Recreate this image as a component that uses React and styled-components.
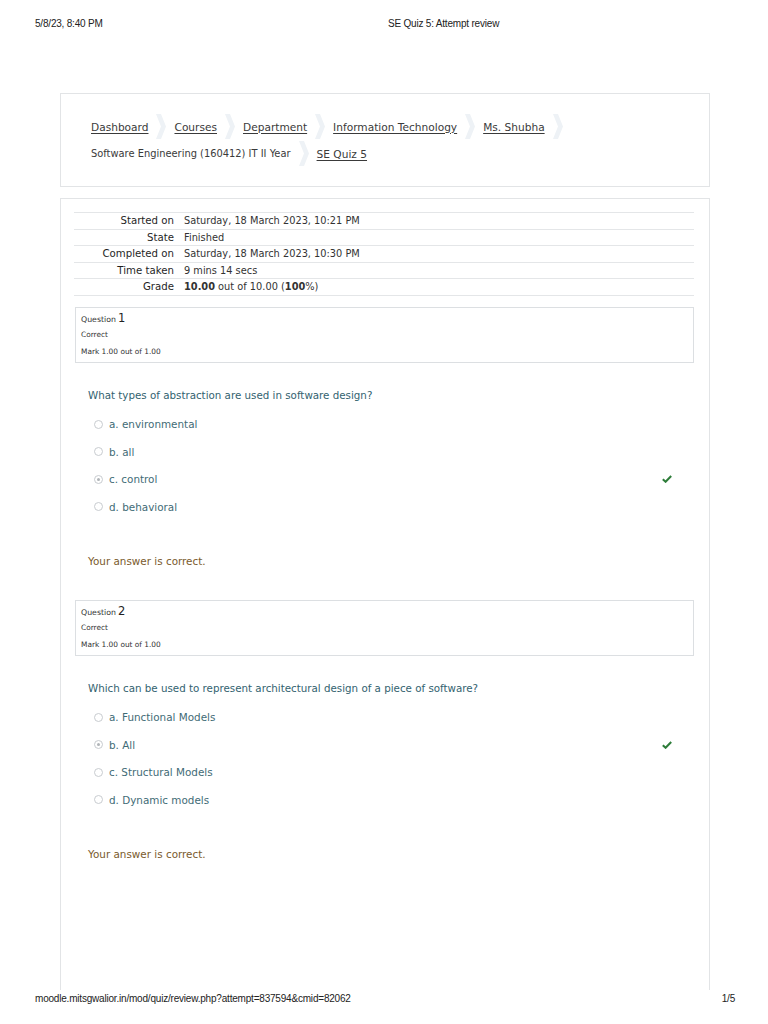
import styled, { createGlobalStyle } from "styled-components";

const GlobalStyle = createGlobalStyle`
	html, body {
		margin: 0;
		padding: 0;
		background: #fff;
	}
	body {
		font-family: "DejaVu Sans", "Noto Sans", sans-serif;
	}
`;

const Page = styled.div`
	width: 768px;
	height: 1024px;
	display: flex;
	flex-direction: column;
	overflow: hidden;
`;

const PrintBar = styled.div`
	display: grid;
	grid-template-columns: 353px 1fr auto;
	align-items: center;
	padding: 0 33px 0 35px;
	height: ${(p) => p.$height}px;
	font-family: "Liberation Sans", Arial, sans-serif;
	font-size: 10px;
	color: #222;
	letter-spacing: -0.2px;
`;

const PrintTop = styled.div`
	height: 93px;
`;

const Card = styled.div`
	margin: 0 58px 0 60px;
	border: 1px solid #e2e4e6;
	background: #fff;
`;

const CrumbCard = styled(Card)`
	height: 94px;
	box-sizing: border-box;
	padding: 19px 30px;
	display: flex;
	flex-direction: column;
`;

const CrumbRow = styled.div`
	display: flex;
	align-items: center;
	height: 27px;
`;

const Crumb = styled.span`
	font-size: ${(p) => (p.$link ? 10.6 : 9.9)}px;
	color: #3a3a3a;
	text-decoration: ${(p) => (p.$link ? "underline" : "none")};
	text-underline-offset: 2px;
	white-space: nowrap;
`;

const Sep = styled.span`
	width: 26px;
	height: 25px;
	display: flex;
	align-items: center;
	justify-content: center;
`;

const MainCard = styled(Card)`
	margin-top: 11px;
	flex: 1;
	border-bottom: none;
	padding: 13px 15px 0 13px;
`;

const Summary = styled.table`
	width: 100%;
	border-collapse: collapse;
	font-size: 9.8px;
	color: #333;
	margin-bottom: 11px;

	td,
	th {
		border-top: 1px solid #e4e6e8;
		border-bottom: 1px solid #e4e6e8;
		height: 15.5px;
		padding: 0;
		line-height: 15px;
	}
	th {
		width: 110px;
		text-align: right;
		font-weight: normal;
		font-size: 10.2px;
		color: #1f1f1f;
		padding-right: 10px;
		box-sizing: border-box;
	}
	b {
		font-weight: 600;
	}
`;

const InfoBox = styled.div`
	border: 1px solid #dcdfe2;
	padding: 3px 5px 0;
	height: 56px;
	box-sizing: border-box;
	margin-left: 1px;
	color: #333;
`;

const InfoLine = styled.div`
	font-size: ${(p) => p.$size || 7.4}px;
	line-height: ${(p) => p.$lh || 16}px;
`;

const QNum = styled.span`
	font-size: 11.5px;
	color: #222;
	margin-left: 2px;
`;

const QText = styled.div`
	margin: 24px 0 0 14px;
	font-size: 10.3px;
	line-height: 16px;
	color: #32626f;
`;

const Options = styled.div`
	margin-top: 8px;
	display: flex;
	flex-direction: column;
`;

const Option = styled.div`
	display: flex;
	align-items: center;
	height: 27.5px;
	padding-left: 20px;
	padding-right: 22px;
	font-size: 10.4px;
	color: #3f6b76;
`;

const Radio = styled.span`
	width: 7px;
	height: 7px;
	border-radius: 50%;
	border: 1px solid #c8ccd0;
	margin-right: 6px;
	display: flex;
	align-items: center;
	justify-content: center;
	flex: none;

	&::after {
		content: "";
		width: 3px;
		height: 3px;
		border-radius: 50%;
		background: ${(p) => (p.$checked ? "#b0b4b8" : "transparent")};
	}
`;

const Label = styled.span`
	flex: 1;
`;

const Feedback = styled.div`
	margin: 32px 0 31px 14px;
	font-size: 10.4px;
	line-height: 16px;
	color: #7a5a2c;
`;

const Chevron = () => (
	<svg width="10" height="25" viewBox="0 0 10 25">
		<path d="M0 0 L5 0 L10 12.5 L5 25 L0 25 L5 12.5 Z" fill="#eef2f6" />
	</svg>
);

const Check = () => (
	<svg width="10" height="8" viewBox="0 0 10 8">
		<path d="M0.8 4.2 L3.6 6.8 L9.2 1" stroke="#2e7d3a" strokeWidth="2" fill="none" />
	</svg>
);

const questions = [
	{
		num: "1",
		text: "What types of abstraction are used in software design?",
		options: ["a. environmental", "b. all", "c. control", "d. behavioral"],
		answer: 2,
	},
	{
		num: "2",
		text: "Which can be used to represent architectural design of a piece of software?",
		options: ["a. Functional Models", "b. All", "c. Structural Models", "d. Dynamic models"],
		answer: 1,
	},
];

const summary = [
	["Started on", "Saturday, 18 March 2023, 10:21 PM"],
	["State", "Finished"],
	["Completed on", "Saturday, 18 March 2023, 10:30 PM"],
	["Time taken", "9 mins 14 secs"],
];

const App = () => {
	return (
		<Page>
			<GlobalStyle />
			<PrintTop>
				<PrintBar $height={46}>
					<span>5/8/23, 8:40 PM</span>
					<span>SE Quiz 5: Attempt review</span>
					<span></span>
				</PrintBar>
			</PrintTop>

			<CrumbCard>
				<CrumbRow>
					<Crumb $link>Dashboard</Crumb>
					<Sep><Chevron /></Sep>
					<Crumb $link>Courses</Crumb>
					<Sep><Chevron /></Sep>
					<Crumb $link>Department</Crumb>
					<Sep><Chevron /></Sep>
					<Crumb $link>Information Technology</Crumb>
					<Sep><Chevron /></Sep>
					<Crumb $link>Ms. Shubha</Crumb>
					<Sep><Chevron /></Sep>
				</CrumbRow>
				<CrumbRow>
					<Crumb>Software Engineering (160412) IT II Year</Crumb>
					<Sep><Chevron /></Sep>
					<Crumb $link>SE Quiz 5</Crumb>
				</CrumbRow>
			</CrumbCard>

			<MainCard>
				<Summary>
					<tbody>
						{summary.map(([k, v]) => (
							<tr key={k}>
								<th>{k}</th>
								<td>{v}</td>
							</tr>
						))}
						<tr>
							<th>Grade</th>
							<td>
								<b>10.00</b> out of 10.00 (<b>100</b>%)
							</td>
						</tr>
					</tbody>
				</Summary>

				{questions.map((q) => (
					<div key={q.num}>
						<InfoBox>
							<InfoLine $lh={15} $size={7.8}>
								Question<QNum>{q.num}</QNum>
							</InfoLine>
							<InfoLine $lh={16}>Correct</InfoLine>
							<InfoLine $lh={17}>Mark 1.00 out of 1.00</InfoLine>
						</InfoBox>
						<QText>{q.text}</QText>
						<Options>
							{q.options.map((o, i) => (
								<Option key={o}>
									<Radio $checked={i === q.answer} />
									<Label>{o}</Label>
									{i === q.answer && <Check />}
								</Option>
							))}
						</Options>
						<Feedback>Your answer is correct.</Feedback>
					</div>
				))}
			</MainCard>

			<PrintBar $height={17}>
				<span>moodle.mitsgwalior.in/mod/quiz/review.php?attempt=837594&amp;cmid=82062</span>
				<span></span>
				<span>1/5</span>
			</PrintBar>
			<div style={{ height: 17 }} />
		</Page>
	);
};

export default App;
